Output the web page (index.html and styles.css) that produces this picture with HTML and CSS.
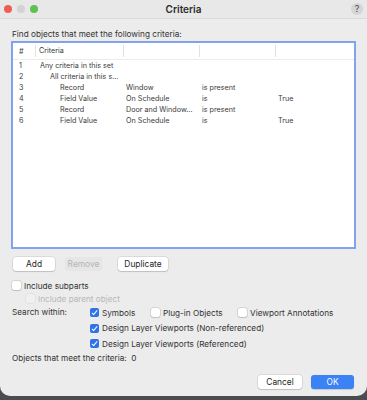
FILE: index.html
```html
<!DOCTYPE html>
<html lang="en">
<head>
    <meta charset="UTF-8">
    <meta name="viewport" content="width=device-width, initial-scale=1.0">
    <title>Criteria</title>
    <link rel="stylesheet" href="styles.css">
</head>
<body>

    <div class="window">
        <div class="titlebar">
            <div class="lights">
                <span class="light red"></span>
                <span class="light gray"></span>
                <span class="light green"></span>
            </div>
            <div class="title">Criteria</div>
            <div class="help">?</div>
        </div>

        <div class="content">
            <p class="label intro">Find objects that meet the following criteria:</p>

            <div class="table">
                <div class="row head">
                    <span class="c-num">#</span>
                    <span class="c-crit">Criteria</span>
                    <span class="c-a"></span>
                    <span class="c-b"></span>
                    <span class="c-c"></span>
                </div>
                <div class="rows">
                    <div class="row">
                        <span class="c-num">1</span>
                        <span class="c-crit lvl0">Any criteria in this set</span>
                    </div>
                    <div class="row">
                        <span class="c-num">2</span>
                        <span class="c-crit lvl1">All criteria in this s...</span>
                    </div>
                    <div class="row">
                        <span class="c-num">3</span>
                        <span class="c-crit lvl2">Record</span>
                        <span class="c-a">Window</span>
                        <span class="c-b">is present</span>
                        <span class="c-c"></span>
                    </div>
                    <div class="row">
                        <span class="c-num">4</span>
                        <span class="c-crit lvl2">Field Value</span>
                        <span class="c-a">On Schedule</span>
                        <span class="c-b">is</span>
                        <span class="c-c">True</span>
                    </div>
                    <div class="row">
                        <span class="c-num">5</span>
                        <span class="c-crit lvl2">Record</span>
                        <span class="c-a">Door and Window...</span>
                        <span class="c-b">is present</span>
                        <span class="c-c"></span>
                    </div>
                    <div class="row">
                        <span class="c-num">6</span>
                        <span class="c-crit lvl2">Field Value</span>
                        <span class="c-a">On Schedule</span>
                        <span class="c-b">is</span>
                        <span class="c-c">True</span>
                    </div>
                </div>
            </div>

            <div class="buttons">
                <button class="btn add">Add</button>
                <button class="btn remove" disabled>Remove</button>
                <button class="btn dup">Duplicate</button>
            </div>

            <label class="check">
                <span class="box"></span>
                <span>Include subparts</span>
            </label>
            <label class="check sub disabled">
                <span class="box"></span>
                <span>Include parent object</span>
            </label>

            <div class="search">
                <span class="label search-label">Search within:</span>
                <div class="search-opts">
                    <div class="opt-line">
                        <label class="check inline w-sym">
                            <span class="box on"></span>
                            <span>Symbols</span>
                        </label>
                        <label class="check inline w-plug">
                            <span class="box"></span>
                            <span>Plug-in Objects</span>
                        </label>
                        <label class="check inline">
                            <span class="box"></span>
                            <span>Viewport Annotations</span>
                        </label>
                    </div>
                    <label class="check inline">
                        <span class="box on"></span>
                        <span>Design Layer Viewports (Non-referenced)</span>
                    </label>
                    <label class="check inline">
                        <span class="box on"></span>
                        <span>Design Layer Viewports (Referenced)</span>
                    </label>
                </div>
            </div>

            <p class="label count">Objects that meet the criteria:&nbsp; 0</p>

            <div class="footer">
                <button class="btn cancel">Cancel</button>
                <button class="btn ok">OK</button>
            </div>
        </div>
    </div>

</body>
</html>
```

FILE: styles.css
```css
body {
    margin: 0;
    background: #4b4c50;
    font-family: Inter, "Liberation Sans", sans-serif;
    color: #262626;
}
.window {
    width: 367px;
    height: 396px;
    background: #ececec;
    border-radius: 0 0 10px 10px;
    overflow: hidden;
}
.titlebar {
    height: 18px;
    display: grid;
    grid-template-columns: 1fr auto 1fr;
    align-items: center;
    border-bottom: 1px solid #d9d9d9;
    background: #e8e8e8;
}
.lights {
    display: flex;
    gap: 5px;
    padding-left: 4px;
}
.light {
    width: 8px;
    height: 8px;
    border-radius: 50%;
}
.red { background: #ee5e57; }
.gray { background: #d3d3d3; }
.green { background: #5fc152; }
.title {
    font-size: 10px;
    font-weight: 600;
    color: #2b2b2b;
}
.help {
    justify-self: end;
    margin-right: 4px;
    width: 12px;
    height: 12px;
    border-radius: 50%;
    background: #d5d5d5;
    font-size: 9px;
    line-height: 12px;
    text-align: center;
    color: #4a4a4a;
}
.content {
    padding: 0 12px;
}
.label {
    font-size: 8.2px;
    color: #333;
}
.intro {
    margin: 9px 0 0;
    height: 13px;
    line-height: 13px;
}
.table {
    margin: 0 -1px;
    height: 204px;
    background: #fff;
    border: 2px solid #7fa3ec;
    font-size: 7.2px;
    color: #3a3a3a;
}
.row {
    display: flex;
    height: 11px;
    align-items: center;
}
.row.head {
    height: 16px;
    border-bottom: 1px solid #ececec;
}
.row span {
    white-space: nowrap;
}
.c-num {
    width: 22px;
    padding-left: 6px;
    box-sizing: border-box;
}
.c-crit {
    width: 88px;
    padding-left: 3px;
    box-sizing: border-box;
}
.c-a {
    width: 76px;
    padding-left: 3px;
    box-sizing: border-box;
}
.c-b {
    width: 76px;
    padding-left: 3px;
    box-sizing: border-box;
}
.c-c {
    padding-left: 3px;
}
.head .c-crit, .head .c-a, .head .c-b, .head .c-c {
    border-left: 1px solid #e2e2e2;
    height: 12px;
    line-height: 12px;
}
.head .c-c {
    flex: 1;
}
.lvl0 { padding-left: 5px; }
.lvl1 { padding-left: 15px; }
.lvl2 { padding-left: 25px; }
.buttons {
    display: flex;
    gap: 10px;
    margin: 8px 0 0 1px;
}
.btn {
    font-family: inherit;
    font-size: 8.4px;
    height: 14px;
    padding: 0 8px;
    background: #fff;
    border: none;
    border-radius: 3px;
    box-shadow: 0 0 0 0.5px rgba(0, 0, 0, 0.15), 0 1px 1px rgba(0, 0, 0, 0.12);
    color: #262626;
}
.add { width: 42px; }
.remove {
    width: 37px;
    padding: 0;
    background: #e6e6e6;
    color: #b5b5b5;
    box-shadow: none;
}
.dup {
    width: 50px;
    padding: 0;
    margin-left: 6px;
}
.check {
    display: flex;
    align-items: center;
    gap: 3px;
    font-size: 8.2px;
    color: #333;
    height: 13px;
}
.buttons + .check {
    margin-top: 8px;
}
.check.sub {
    margin-left: 14px;
}
.check.disabled {
    color: #b8b8b8;
}
.box {
    width: 9px;
    height: 9px;
    border-radius: 2px;
    background: #fff;
    box-shadow: 0 0 0 0.5px rgba(0, 0, 0, 0.2), 0 1px 1px rgba(0, 0, 0, 0.1);
    box-sizing: border-box;
    position: relative;
}
.disabled .box {
    background: #f0f0f0;
    box-shadow: 0 0 0 0.5px rgba(0, 0, 0, 0.08);
}
.box.on {
    background: #2f72e8;
    box-shadow: none;
}
.box.on::after {
    content: "";
    position: absolute;
    left: 3px;
    top: 1px;
    width: 2px;
    height: 5px;
    border: solid #fff;
    border-width: 0 1.5px 1.5px 0;
    transform: rotate(40deg);
}
.search {
    display: flex;
    margin-top: 1px;
}
.search-label {
    width: 78px;
    height: 13px;
    line-height: 13px;
}
.search-opts {
    display: flex;
    flex-direction: column;
    gap: 2.5px;
}
.opt-line {
    display: flex;
}
.w-sym { width: 61px; }
.w-plug { width: 87px; }
.count {
    margin: 3px 0 0;
}
.footer {
    display: flex;
    justify-content: flex-end;
    gap: 9px;
    margin-top: 12px;
    padding-right: 1px;
}
.cancel {
    width: 44px;
    padding: 0;
}
.ok {
    width: 43px;
    padding: 0;
    background: #3a82f6;
    color: #fff;
    box-shadow: 0 1px 1px rgba(0, 0, 0, 0.15);
}
```
